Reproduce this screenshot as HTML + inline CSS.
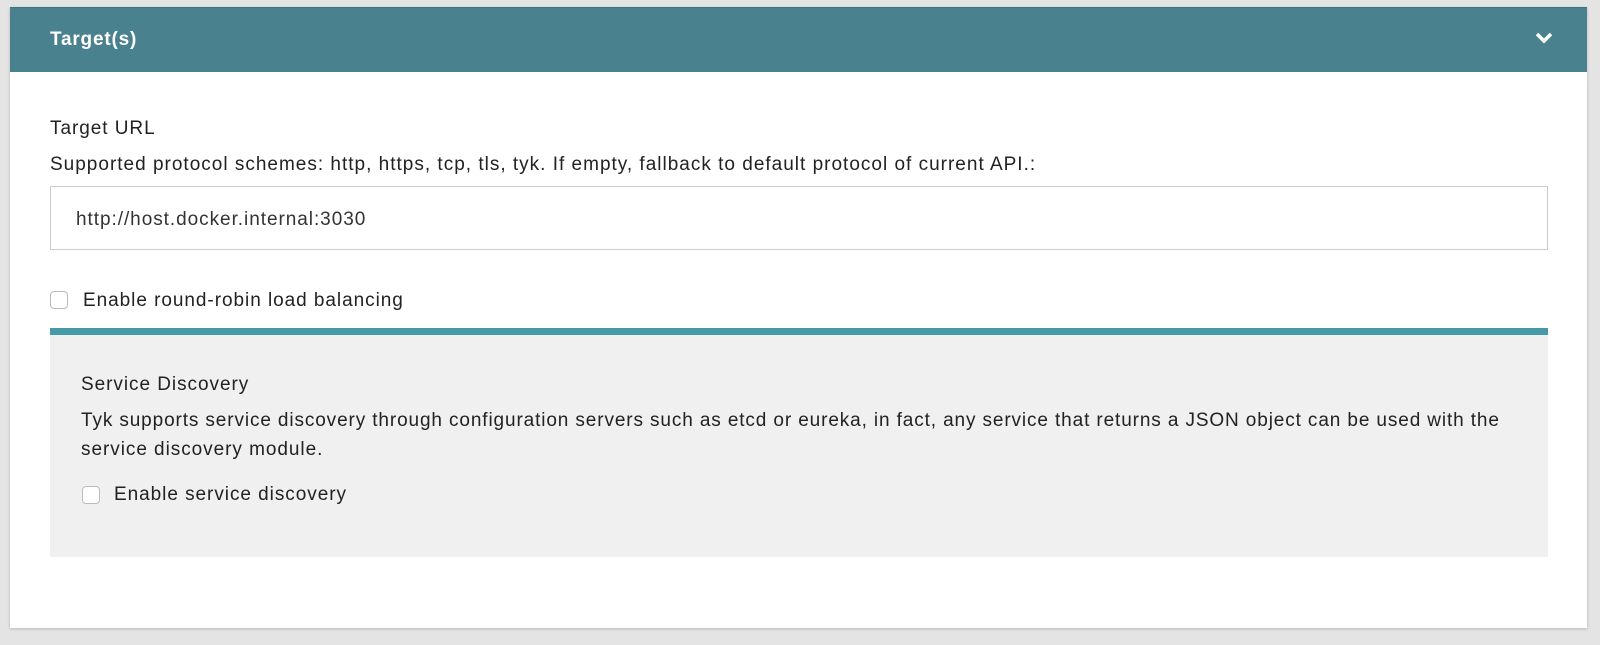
<!DOCTYPE html>
<html><head><style>
body{margin:0;width:1600px;height:645px;background:#e4e4e4;font-family:"Liberation Sans",sans-serif;color:#222;position:relative;overflow:hidden}
.card{position:absolute;left:10px;top:7px;width:1577px;height:621px;background:#fff;box-shadow:0 1px 3px rgba(0,0,0,.2)}
.hdr{position:absolute;left:0;top:0;width:100%;height:64px;background:#4a818e;border-top:1px solid #3f737f}
.hdr span{position:absolute;left:40px;top:21px;color:#fff;font-weight:bold;font-size:19px;letter-spacing:0.8px}
.t{position:absolute;font-size:19px;letter-spacing:0.95px;white-space:nowrap}
.inp{position:absolute;left:40px;top:179px;width:1498px;height:64px;border:1px solid #ccc;box-sizing:border-box}
.cb{position:absolute;width:18px;height:18px;border:1px solid #bbb;border-radius:4px;background:#fff;box-sizing:border-box}
.bar{position:absolute;left:40px;top:321px;width:1498px;height:7px;background:#4699a6}
.sd{position:absolute;left:40px;top:328px;width:1498px;height:222px;background:#f0f0f0}
</style></head><body>
<div class="card">
<div class="hdr"><span>Target(s)</span>
<svg style="position:absolute;left:1525px;top:24px" width="18" height="12" viewBox="0 0 18 12"><path d="M2 2 L9 9 L16 2" stroke="#fff" stroke-width="3.5" fill="none"/></svg></div>
<div class="t" style="left:40px;top:111px">Target URL</div>
<div class="t" style="left:40px;top:147px;letter-spacing:1px">Supported protocol schemes: http, https, tcp, tls, tyk. If empty, fallback to default protocol of current API.:</div>
<div class="inp"></div>
<div class="t" style="left:66px;top:202px;color:#333">http://host.docker.internal:3030</div>
<div class="cb" style="left:40px;top:284px"></div>
<div class="t" style="left:73px;top:283px">Enable round-robin load balancing</div>
<div class="bar"></div>
<div class="sd"></div>
<div class="t" style="left:71px;top:367px">Service Discovery</div>
<div class="t" style="left:71px;top:403px;letter-spacing:0.88px">Tyk supports service discovery through configuration servers such as etcd or eureka, in fact, any service that returns a JSON object can be used with the</div>
<div class="t" style="left:71px;top:432px">service discovery module.</div>
<div class="cb" style="left:72px;top:479px"></div>
<div class="t" style="left:104px;top:477px">Enable service discovery</div>
</div>
</body></html>
